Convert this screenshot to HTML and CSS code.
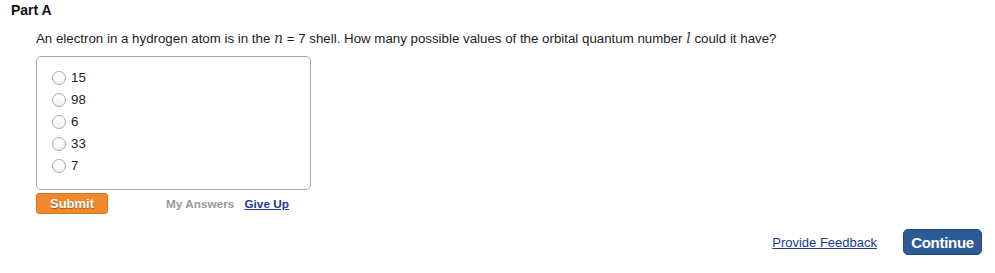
FILE: index.html
```html
<!DOCTYPE html>
<html lang="en">
<head>
    <meta charset="UTF-8">
    <title>Part A</title>
    <link rel="stylesheet" href="styles.css">
</head>
<body>

    <h2 class="part-title">Part A</h2>

    <div class="question">
        <p class="prompt">An electron in a hydrogen atom is in the <i class="var">n</i> = 7 shell. How many possible values of the orbital quantum number <i class="var">l</i> could it have?</p>

        <div class="choices">
            <label class="choice"><input type="radio" name="ans"> 15</label>
            <label class="choice"><input type="radio" name="ans"> 98</label>
            <label class="choice"><input type="radio" name="ans"> 6</label>
            <label class="choice"><input type="radio" name="ans"> 33</label>
            <label class="choice"><input type="radio" name="ans"> 7</label>
        </div>

        <div class="actions">
            <button class="btn-submit">Submit</button>
            <span class="my-answers">My Answers</span>
            <a href="#" class="give-up">Give Up</a>
        </div>
    </div>

    <div class="footer">
        <a href="#" class="feedback">Provide Feedback</a>
        <button class="btn-continue">Continue</button>
    </div>

</body>
</html>
```

FILE: styles.css
```css
* {
    margin: 0;
    padding: 0;
    box-sizing: border-box;
}

body {
    font-family: 'Liberation Sans', Arial, sans-serif;
    color: #222;
    background: #fff;
    width: 995px;
    height: 273px;
    overflow: hidden;
}

.part-title {
    font-size: 14px;
    font-weight: bold;
    color: #111;
    padding: 2px 0 0 11px;
    line-height: 16px;
}

.question {
    padding-left: 36px;
}

.prompt {
    font-size: 13.3px;
    line-height: 16px;
    margin-top: 12px;
    color: #222;
}

.var {
    font-family: 'DejaVu Serif', 'Liberation Serif', serif;
    font-size: 14px;
    color: #333;
}

.choices {
    margin-top: 9px;
    width: 275px;
    height: 134px;
    border: 1px solid #aaa;
    border-radius: 5px;
    padding: 13px 0 0 15px;
    display: flex;
    flex-direction: column;
    gap: 6px;
}

.choice {
    display: flex;
    align-items: center;
    gap: 5px;
    font-size: 13.3px;
    line-height: 16px;
    height: 16px;
    color: #222;
}

.choice input {
    appearance: none;
    -webkit-appearance: none;
    width: 14px;
    height: 14px;
    margin: 0;
    border: 1px solid #a8a8a8;
    border-radius: 50%;
    background: linear-gradient(#fff, #f2f2f2);
}

.actions {
    display: flex;
    align-items: center;
    margin-top: 3px;
}

.btn-submit {
    width: 72px;
    height: 21px;
    background: #f0892a;
    border: 1px solid #d8761d;
    border-radius: 3px;
    color: #fff;
    font-family: 'Liberation Sans', Arial, sans-serif;
    font-weight: bold;
    font-size: 13px;
    text-shadow: 0 1px 1px rgba(0, 0, 0, 0.35);
}

.my-answers {
    margin-left: 58px;
    font-size: 11.8px;
    font-weight: bold;
    color: #999;
}

.give-up {
    margin-left: 10px;
    font-size: 11.8px;
    font-weight: bold;
    color: #1a3a94;
}

.footer {
    display: flex;
    align-items: center;
    justify-content: flex-end;
    margin-top: 15px;
    padding-right: 13px;
}

.feedback {
    font-size: 13px;
    color: #1a3a94;
    margin-right: 26px;
}

.btn-continue {
    width: 79px;
    height: 26px;
    background: #2b5a96;
    border: 1px solid #1f4a80;
    border-radius: 5px;
    color: #fff;
    font-family: 'Liberation Sans', Arial, sans-serif;
    font-weight: bold;
    font-size: 15px;
    letter-spacing: -0.3px;
}
```
